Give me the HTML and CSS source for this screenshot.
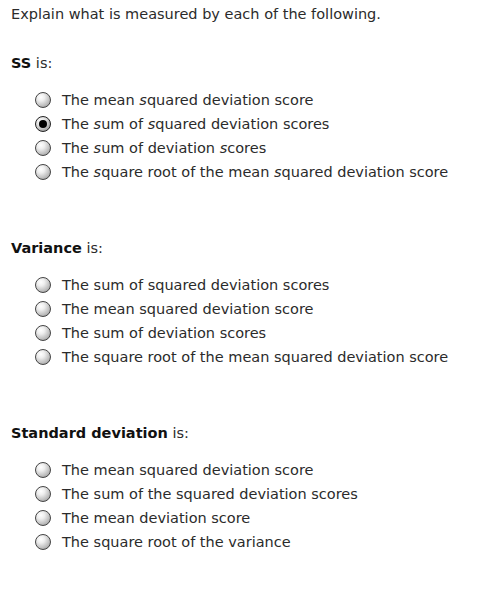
FILE: index.html
```html
<!DOCTYPE html>
<html>
<head>
<meta charset="utf-8">
<link rel="stylesheet" href="styles.css">
</head>
<body>
<div class="page">
  <p class="intro">Explain what is measured by each of the following.</p>

  <section class="question">
    <p class="prompt"><b>SS</b> is:</p>
    <ul class="options">
      <li><span class="radio"></span><span>The mean <i>s</i>quared deviation score</span></li>
      <li><span class="radio checked"></span><span>The <i>s</i>um of <i>s</i>quared deviation scores</span></li>
      <li><span class="radio"></span><span>The <i>s</i>um of deviation <i>s</i>cores</span></li>
      <li><span class="radio"></span><span>The <i>s</i>quare root of the mean <i>s</i>quared deviation score</span></li>
    </ul>
  </section>

  <section class="question">
    <p class="prompt"><b>Variance</b> is:</p>
    <ul class="options">
      <li><span class="radio"></span><span>The sum of squared deviation scores</span></li>
      <li><span class="radio"></span><span>The mean squared deviation score</span></li>
      <li><span class="radio"></span><span>The sum of deviation scores</span></li>
      <li><span class="radio"></span><span>The square root of the mean squared deviation score</span></li>
    </ul>
  </section>

  <section class="question">
    <p class="prompt"><b>Standard deviation</b> is:</p>
    <ul class="options">
      <li><span class="radio"></span><span>The mean squared deviation score</span></li>
      <li><span class="radio"></span><span>The sum of the squared deviation scores</span></li>
      <li><span class="radio"></span><span>The mean deviation score</span></li>
      <li><span class="radio"></span><span>The square root of the variance</span></li>
    </ul>
  </section>
</div>
</body>
</html>
```

FILE: styles.css
```css
html, body {
  margin: 0;
  padding: 0;
  background: #ffffff;
}
.page {
  font-family: "DejaVu Sans", Verdana, sans-serif;
  font-size: 14.5px;
  color: #2b2b2b;
  padding: 4px 0 0 11px;
  display: flex;
  flex-direction: column;
}
p { margin: 0; }
.intro {
  line-height: 20px;
}
.question {
  display: flex;
  flex-direction: column;
}
.question + .question {
  margin-top: 25px;
}
.prompt {
  margin-top: 29px;
  line-height: 20px;
}
.prompt b { color: #111; }
.options {
  list-style: none;
  margin: 15px 0 0 0;
  padding: 0 0 0 24px;
  display: flex;
  flex-direction: column;
}
.options li {
  display: flex;
  align-items: center;
  height: 24px;
  gap: 11px;
}
.options i {
  font-style: italic;
}
.radio {
  width: 14px;
  height: 14px;
  border-radius: 50%;
  border: 1px solid #444;
  background: radial-gradient(circle at 35% 30%, #ffffff 0%, #eeeeee 28%, #b8b8b8 70%, #7a7a7a 100%);
  flex: none;
  position: relative;
}
.radio.checked {
  border-color: #222;
  background: radial-gradient(circle at 35% 30%, #ffffff 0%, #dddddd 40%, #808080 100%);
}
.radio.checked::after {
  content: "";
  position: absolute;
  left: 3px;
  top: 3px;
  width: 8px;
  height: 8px;
  border-radius: 50%;
  background: #000;
}
```
